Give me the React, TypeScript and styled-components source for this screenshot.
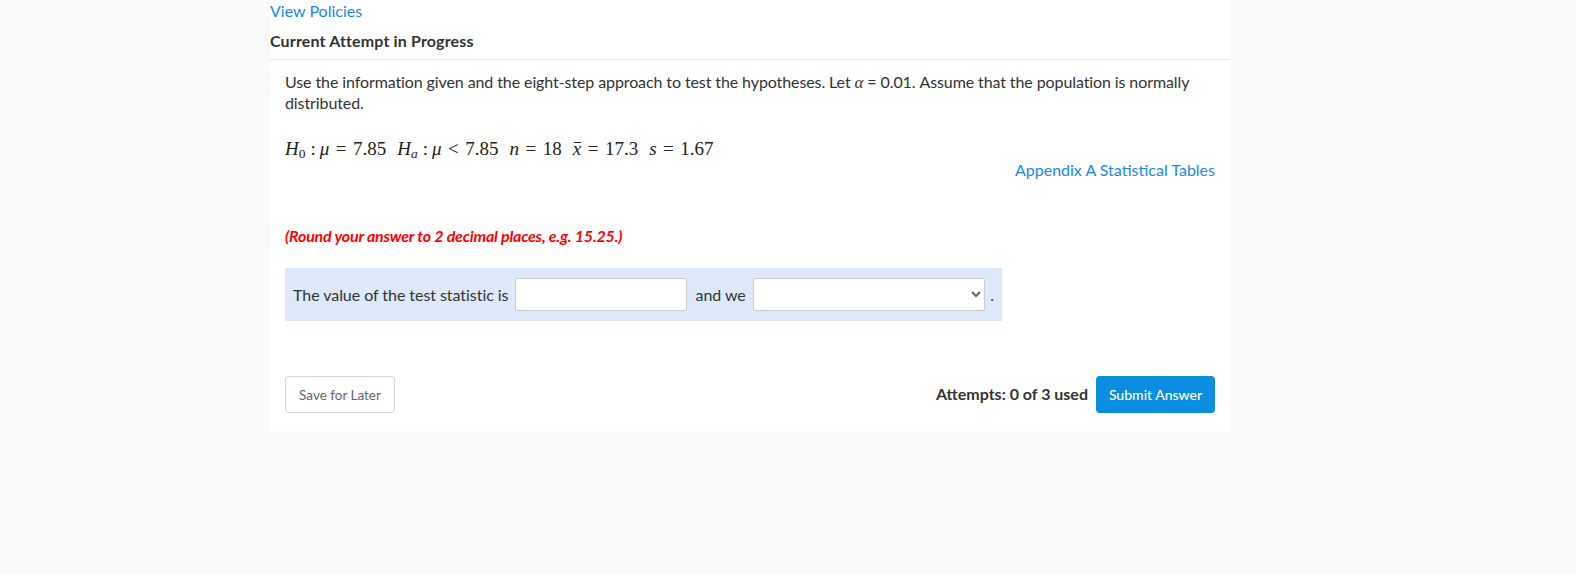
import React from "react";
import styled, { createGlobalStyle } from "styled-components";

const Global = createGlobalStyle`
  html, body { margin: 0; padding: 0; background: #fafafa; }
  body { font-family: Lato, "Open Sans", Arial, sans-serif; color: #333; }
`;

const Page = styled.div`
  min-height: 574px;
  padding-left: 270px;
  background: #fafafa;
`;

const Card = styled.div`
  width: 960px;
  background: #fff;
`;

const Header = styled.div`
  display: flex;
  flex-direction: column;
  border-bottom: 1px solid #e8e8e8;
  padding-bottom: 7px;
`;

const Link = styled.a`
  color: #1a8ae5;
  font-size: 16px;
  line-height: 22px;
  text-decoration: none;
  cursor: pointer;
`;

const Title = styled.div`
  margin-top: 8px;
  font-size: 16px;
  line-height: 22px;
  font-weight: 700;
  letter-spacing: 0.15px;
  color: #333;
`;

const Body = styled.div`
  padding: 11px 15px 18px 15px;
  display: flex;
  flex-direction: column;
`;

const Para = styled.p`
  margin: 0;
  font-size: 16px;
  line-height: 21px;
  letter-spacing: -0.1px;
  color: #333;
`;

const Alpha = styled.span`
  font-family: "Liberation Serif", "DejaVu Serif", serif;
  font-style: italic;
  font-size: 17px;
  line-height: 1;
`;

const MathLine = styled.div`
  margin-top: 24px;
  display: flex;
  align-items: baseline;
  font-family: "Liberation Serif", "Times New Roman", serif;
  font-size: 19px;
  line-height: 24px;
  color: #222;
  white-space: pre;
`;

const Term = styled.span`
  margin-right: 11px;
  display: inline-flex;
  align-items: baseline;
`;

const I = styled.i`
  font-style: italic;
`;

const Sub = styled.span`
  font-size: 13.5px;
  position: relative;
  top: 3px;
  margin-right: 1px;
`;

const Op = styled.span<{ $tight?: boolean }>`
  margin: 0 ${(p) => (p.$tight ? "4px" : "6.5px")};
`;

const Bar = styled.i`
  font-style: italic;
  position: relative;
  &::before {
    content: "";
    position: absolute;
    left: 1px;
    right: 0;
    top: 5px;
    height: 1px;
    background: #222;
  }
`;

const Right = styled.div`
  display: flex;
  justify-content: flex-end;
  margin-top: -4px;
`;

const Note = styled.div`
  margin-top: 44px;
  color: #f00;
  font-weight: 700;
  font-style: italic;
  font-size: 16px;
  line-height: 21px;
  letter-spacing: -0.2px;
`;

const AnswerBox = styled.div`
  margin-top: 22px;
  width: 717px;
  height: 53px;
  box-sizing: border-box;
  background: #dde9f8;
  display: flex;
  align-items: center;
  padding: 0 8px;
  font-size: 16px;
  color: #333;
`;

const Label = styled.span`
  margin: 0 7px 0 0;
  white-space: nowrap;
  letter-spacing: -0.05px;
`;

const TextInput = styled.input`
  width: 172px;
  height: 33px;
  box-sizing: border-box;
  border: 1px solid #ccc;
  border-radius: 2px;
  background: #fff;
  margin-right: 8px;
  font-family: inherit;
  font-size: 15px;
`;

const Select = styled.select`
  width: 235px;
  height: 33px;
  box-sizing: border-box;
  border: 1px solid #ccc;
  border-radius: 2px;
  background: #fff;
  margin-right: 5px;
  font-family: inherit;
  font-size: 15px;
  color: #666;
`;

const Footer = styled.div`
  margin-top: 55px;
  display: flex;
  align-items: center;
  justify-content: space-between;
`;

const SaveButton = styled.button`
  height: 37px;
  width: 110px;
  box-sizing: border-box;
  border: 1px solid #d4d4d4;
  border-radius: 4px;
  background: #fff;
  color: #666;
  font-family: Lato, sans-serif;
  font-size: 13.5px;
  cursor: pointer;
`;

const Group = styled.div`
  display: flex;
  align-items: center;
  gap: 8px;
`;

const Attempts = styled.span`
  font-size: 16px;
  font-weight: 700;
  color: #333;
  margin-top: -3px;
`;

const SubmitButton = styled.button`
  height: 37px;
  width: 119px;
  box-sizing: border-box;
  border: none;
  border-radius: 4px;
  background: #0b8de0;
  color: #fff;
  font-family: Lato, sans-serif;
  font-size: 14px;
  font-weight: 500;
  cursor: pointer;
`;

export default function App() {
  return (
    <>
      <Global />
      <Page>
        <Card>
          <Header>
            <Link>View Policies</Link>
            <Title>Current Attempt in Progress</Title>
          </Header>
          <Body>
            <Para>
              Use the information given and the eight-step approach to test the hypotheses. Let <Alpha>α</Alpha> = 0.01. Assume that the population is normally distributed.
            </Para>
            <MathLine>
              <Term>
                <I>H</I><Sub>0</Sub><Op $tight>:</Op><I>μ</I><Op>=</Op>7.85
              </Term>
              <Term>
                <I>H</I><Sub><I>a</I></Sub><Op $tight>:</Op><I>μ</I><Op>&lt;</Op>7.85
              </Term>
              <Term>
                <I>n</I><Op>=</Op>18
              </Term>
              <Term>
                <Bar>x</Bar><Op>=</Op>17.3
              </Term>
              <Term>
                <I>s</I><Op>=</Op>1.67
              </Term>
            </MathLine>
            <Right>
              <Link>Appendix A Statistical Tables</Link>
            </Right>
            <Note>(Round your answer to 2 decimal places, e.g. 15.25.)</Note>
            <AnswerBox>
              <Label>The value of the test statistic is</Label>
              <TextInput type="text" />
              <Label>and we</Label>
              <Select defaultValue="">
                <option value=""></option>
                <option value="reject">reject the null hypothesis</option>
                <option value="fail">fail to reject the null hypothesis</option>
              </Select>
              <span>.</span>
            </AnswerBox>
            <Footer>
              <SaveButton>Save for Later</SaveButton>
              <Group>
                <Attempts>Attempts: 0 of 3 used</Attempts>
                <SubmitButton>Submit Answer</SubmitButton>
              </Group>
            </Footer>
          </Body>
        </Card>
      </Page>
    </>
  );
}
